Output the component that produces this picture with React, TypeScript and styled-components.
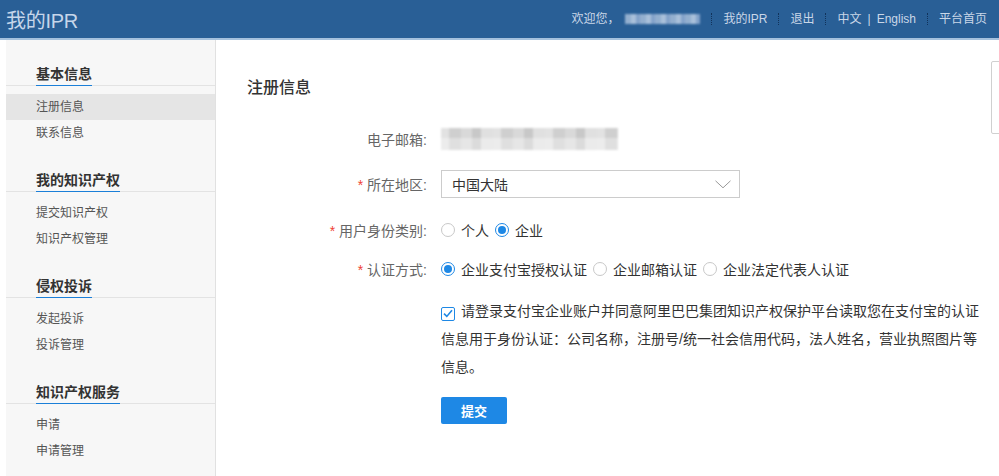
import styled, { createGlobalStyle } from 'styled-components'

const GlobalStyle = createGlobalStyle`
  html, body {
    margin: 0;
    padding: 0;
    height: 100%;
    overflow: hidden;
    background: #fff;
  }
  body {
    font-family: "Liberation Sans", "Noto Sans CJK SC", sans-serif;
  }
`

const BLUE = '#1e88e5'

const Page = styled.div`
  display: flex;
  flex-direction: column;
  height: 100vh;
  position: relative;
`

const Header = styled.header`
  height: 38px;
  flex-shrink: 0;
  display: flex;
  align-items: center;
  justify-content: space-between;
  background: #295f96;
  border-bottom: 2px solid #a5c1dd;
  padding: 0 12px 0 6px;
`

const Logo = styled.div`
  font-size: 20px;
  color: #c6d6ea;
  letter-spacing: -0.3px;
`

const Nav = styled.nav`
  display: flex;
  align-items: center;
  font-size: 12px;
  color: #c9d7e8;
`

const NavItem = styled.span`
  display: flex;
  align-items: center;
  padding: 0 11px;
  border-left: 1px dotted rgba(10, 35, 70, 0.75);
  line-height: 12px;
  &:first-child {
    border-left: none;
  }
  &:last-child {
    padding-right: 0;
  }
`

const NavSplit = styled.span`
  margin: 0 6px;
`

const Masked = styled.span<{ $w: number }>`
  display: inline-block;
  width: ${p => p.$w}px;
  height: 10px;
  margin-left: 6px;
  background: repeating-linear-gradient(90deg, #9fb8d6 0 6px, #b7cbe2 6px 11px, #8eaad0 11px 15px);
  filter: blur(0.8px);
  opacity: 0.9;
`

const Body = styled.div`
  flex: 1;
  display: flex;
  min-height: 0;
`

const Sidebar = styled.aside`
  margin-left: 6px;
  width: 209px;
  flex-shrink: 0;
  background: #f7f7f7;
  border-right: 1px solid #e1e1e1;
  padding-top: 24px;
`

const Group = styled.div`
  margin-bottom: 24px;
`

const GroupTitle = styled.div`
  display: flex;
  height: 22px;
  box-sizing: border-box;
  padding-left: 30px;
  margin-bottom: 8px;
  border-bottom: 1px solid #e3e3e3;
  font-size: 14px;
  font-weight: bold;
  color: #333;
`

const GroupTitleText = styled.span`
  line-height: 21px;
  border-bottom: 1px solid #1b7fd8;
  margin-bottom: -1px;
`

const MenuItem = styled.div<{ $active?: boolean }>`
  height: 26px;
  line-height: 26px;
  padding-left: 30px;
  font-size: 12px;
  color: #555;
  background: ${p => (p.$active ? '#e5e5e5' : 'transparent')};
`

const Main = styled.main`
  flex: 1;
  padding: 36px 0 0 31px;
`

const Title = styled.h2`
  margin: 0;
  font-size: 16px;
  line-height: 24px;
  font-weight: 500;
  color: #333;
`

const Row = styled.div<{ $mt: number }>`
  display: flex;
  align-items: center;
  min-height: 28px;
  margin-top: ${p => p.$mt}px;
`

const Label = styled.div`
  width: 180px;
  flex-shrink: 0;
  margin-right: 14px;
  text-align: right;
  font-size: 14px;
  color: #666;
`

const Req = styled.span`
  color: #f04134;
  margin-right: 4px;
`

const EmailMask = styled.div`
  width: 177px;
  height: 22px;
  background:
    linear-gradient(180deg, transparent 0 45%, rgba(255,255,255,0.35) 45% 100%),
    repeating-linear-gradient(90deg, #e2e2e2 0 8px, #cfcfcf 8px 20px, #d9d9d9 20px 31px, #c8c8c8 31px 40px, #e0e0e0 40px 52px);
  filter: blur(1.2px);
`

const Select = styled.div`
  width: 299px;
  height: 28px;
  box-sizing: border-box;
  border: 1px solid #ccc;
  display: flex;
  align-items: center;
  justify-content: space-between;
  padding: 0 8px 0 10px;
  font-size: 14px;
  color: #333;
`

const Options = styled.div`
  display: flex;
  align-items: center;
  font-size: 14px;
  color: #333;
`

const Radio = styled.span<{ $checked?: boolean }>`
  width: 14px;
  height: 14px;
  box-sizing: border-box;
  border-radius: 50%;
  border: 1px solid ${p => (p.$checked ? BLUE : '#c8c8c8')};
  margin-right: 6px;
  display: flex;
  align-items: center;
  justify-content: center;
  background: #fff;
  &::after {
    content: '';
    width: 8px;
    height: 8px;
    border-radius: 50%;
    background: ${p => (p.$checked ? BLUE : 'transparent')};
  }
`

const OptionText = styled.span`
  margin-right: 6px;
`

const Agreement = styled.p`
  margin: 14px 0 0 194px;
  width: 545px;
  font-size: 14px;
  line-height: 28px;
  color: #333;
`

const Check = styled.span`
  display: inline-flex;
  align-items: center;
  justify-content: center;
  width: 14px;
  height: 14px;
  box-sizing: border-box;
  border: 1px solid ${BLUE};
  border-radius: 2px;
  margin-right: 6px;
  vertical-align: -2px;
`

const Submit = styled.button`
  margin: 16px 0 0 194px;
  width: 66px;
  height: 27px;
  border: none;
  border-radius: 2px;
  background: ${BLUE};
  color: #fff;
  font-family: inherit;
  font-size: 13px;
  font-weight: bold;
  padding: 0;
`

const SideTab = styled.div`
  position: absolute;
  top: 61px;
  right: -8px;
  width: 14px;
  height: 71px;
  border: 1px solid #d0d0d0;
  border-radius: 2px;
  background: #fff;
`

const menu = [
  { title: '基本信息', items: ['注册信息', '联系信息'] },
  { title: '我的知识产权', items: ['提交知识产权', '知识产权管理'] },
  { title: '侵权投诉', items: ['发起投诉', '投诉管理'] },
  { title: '知识产权服务', items: ['申请', '申请管理'] },
]

export default function App() {
  return (
    <>
      <GlobalStyle />
      <Page>
        <Header>
          <Logo>我的IPR</Logo>
          <Nav>
            <NavItem>
              欢迎您，<Masked $w={75} />
            </NavItem>
            <NavItem>我的IPR</NavItem>
            <NavItem>退出</NavItem>
            <NavItem>
              中文<NavSplit>|</NavSplit>English
            </NavItem>
            <NavItem>平台首页</NavItem>
          </Nav>
        </Header>
        <Body>
          <Sidebar>
            {menu.map(g => (
              <Group key={g.title}>
                <GroupTitle>
                  <GroupTitleText>{g.title}</GroupTitleText>
                </GroupTitle>
                {g.items.map(it => (
                  <MenuItem key={it} $active={it === '注册信息'}>
                    {it}
                  </MenuItem>
                ))}
              </Group>
            ))}
          </Sidebar>
          <Main>
            <Title>注册信息</Title>
            <Row $mt={25}>
              <Label>电子邮箱:</Label>
              <EmailMask />
            </Row>
            <Row $mt={17}>
              <Label>
                <Req>*</Req>所在地区:
              </Label>
              <Select>
                <span>中国大陆</span>
                <svg width="16" height="9" viewBox="0 0 16 9">
                  <path d="M0.5 0.8 L8 7.8 L15.5 0.8" fill="none" stroke="#999" strokeWidth="1" />
                </svg>
              </Select>
            </Row>
            <Row $mt={18}>
              <Label>
                <Req>*</Req>用户身份类别:
              </Label>
              <Options>
                <Radio />
                <OptionText>个人</OptionText>
                <Radio $checked />
                <OptionText>企业</OptionText>
              </Options>
            </Row>
            <Row $mt={11}>
              <Label>
                <Req>*</Req>认证方式:
              </Label>
              <Options>
                <Radio $checked />
                <OptionText>企业支付宝授权认证</OptionText>
                <Radio />
                <OptionText>企业邮箱认证</OptionText>
                <Radio />
                <OptionText>企业法定代表人认证</OptionText>
              </Options>
            </Row>
            <Agreement>
              <Check>
                <svg width="10" height="9" viewBox="0 0 10 9">
                  <path d="M1 4.6 L3.8 7.4 L9 1.2" fill="none" stroke={BLUE} strokeWidth="1.6" />
                </svg>
              </Check>
              请登录支付宝企业账户并同意阿里巴巴集团知识产权保护平台读取您在支付宝的认证信息用于身份认证：公司名称，注册号/统一社会信用代码，法人姓名，营业执照图片等信息。
            </Agreement>
            <Submit>提交</Submit>
          </Main>
        </Body>
        <SideTab />
      </Page>
    </>
  )
}
